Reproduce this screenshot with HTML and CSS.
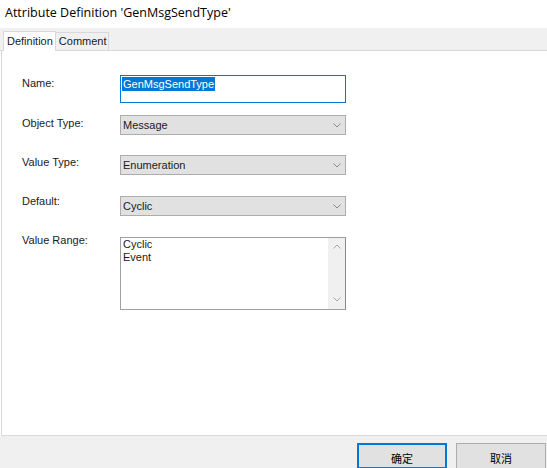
FILE: index.html
```html
<!DOCTYPE html>
<html>
<head>
<meta charset="utf-8">
<link rel="stylesheet" href="styles.css">
</head>
<body>
<div class="window">
  <div class="titlebar">Attribute Definition 'GenMsgSendType'</div>
  <div class="tabstrip">
    <div class="tab active">Definition</div>
    <div class="tab">Comment</div>
  </div>
  <div class="panel">
    <div class="form">
      <div class="labels">
        <div class="lbl l1">Name:</div>
        <div class="lbl l2">Object Type:</div>
        <div class="lbl l3">Value Type:</div>
        <div class="lbl l4">Default:</div>
        <div class="lbl l5">Value Range:</div>
      </div>
      <div class="fields">
        <div class="input"><span class="sel">GenMsgSendType</span></div>
        <div class="combo c1"><span>Message</span><svg class="chev" width="8" height="5" viewBox="0 0 8 5"><polyline points="0.5,0.5 4,4 7.5,0.5" fill="none" stroke="#8a8a8a" stroke-width="1"/></svg></div>
        <div class="combo c2"><span>Enumeration</span><svg class="chev" width="8" height="5" viewBox="0 0 8 5"><polyline points="0.5,0.5 4,4 7.5,0.5" fill="none" stroke="#8a8a8a" stroke-width="1"/></svg></div>
        <div class="combo c3"><span>Cyclic</span><svg class="chev" width="8" height="5" viewBox="0 0 8 5"><polyline points="0.5,0.5 4,4 7.5,0.5" fill="none" stroke="#8a8a8a" stroke-width="1"/></svg></div>
        <div class="listbox">
          <div class="items">
            <div class="item">Cyclic</div>
            <div class="item">Event</div>
          </div>
          <div class="scrollbar">
            <svg width="8" height="5" viewBox="0 0 8 5"><polyline points="0.5,4.5 4,1 7.5,4.5" fill="none" stroke="#a6a6a6" stroke-width="1"/></svg>
            <svg width="8" height="5" viewBox="0 0 8 5"><polyline points="0.5,0.5 4,4 7.5,0.5" fill="none" stroke="#a6a6a6" stroke-width="1"/></svg>
          </div>
        </div>
      </div>
    </div>
  </div>
  <div class="footer">
    <div class="btn default">确定</div>
    <div class="btn">取消</div>
  </div>
</div>
</body>
</html>
```
FILE: styles.css
```css
html, body {
  margin: 0;
  padding: 0;
  background: #ffffff;
}
.window {
  width: 547px;
  height: 468px;
  overflow: hidden;
  display: flex;
  flex-direction: column;
  font-family: "Liberation Sans", Arial, sans-serif;
  font-size: 11px;
  color: #1a1a1a;
}
.titlebar {
  height: 28px;
  flex: none;
  box-sizing: border-box;
  padding: 4px 0 0 5px;
  font-family: "Open Sans", "Noto Sans", sans-serif;
  font-size: 12.5px;
  line-height: 18px;
  color: #000;
  background: #fff;
}
.tabstrip {
  height: 23px;
  flex: none;
  box-sizing: border-box;
  background: #f0f0f0;
  border-bottom: 1px solid #d9d9d9;
  display: flex;
  align-items: flex-end;
  padding-left: 3px;
}
.tab {
  box-sizing: border-box;
  height: 18px;
  padding: 2px 1px 0 3px;
  line-height: 13px;
  border: 1px solid #d9d9d9;
  border-bottom: none;
  border-left: none;
  background: #f0f0f0;
}
.tab.active {
  height: 20px;
  margin-bottom: -1px;
  padding: 3px 2px 0 3px;
  background: #fff;
  border-left: 1px solid #d9d9d9;
  border-right: 1px solid #d9d9d9;
}
.panel {
  flex: 1;
  margin-left: 1px;
  background: #fff;
  border-left: 1px solid #d9d9d9;
  border-bottom: 1px solid #dadada;
}
.form {
  display: grid;
  grid-template-columns: 98px 226px;
  padding: 24px 0 0 20px;
}
.labels {
  display: flex;
  flex-direction: column;
}
.lbl {
  line-height: 13px;
  height: 13px;
}
.l1 { margin-top: 2px; }
.l2 { margin-top: 27px; }
.l3 { margin-top: 26px; }
.l4 { margin-top: 26px; }
.l5 { margin-top: 26px; }
.fields {
  display: flex;
  flex-direction: column;
}
.input {
  box-sizing: border-box;
  height: 28px;
  border: 1px solid #0078d7;
  padding: 1px 0 0 1px;
  line-height: 14px;
}
.sel {
  background: #0078d7;
  color: #fff;
  padding: 0 1px;
  display: inline-block;
  height: 14px;
}
.combo {
  box-sizing: border-box;
  height: 20px;
  border: 1px solid #adadad;
  background: #e1e1e1;
  display: flex;
  align-items: center;
  justify-content: space-between;
  padding: 0 4px 0 2px;
  line-height: 18px;
}
.chev { margin-top: 1px; }
.c1 { margin-top: 12px; }
.c2 { margin-top: 20px; }
.c3 { margin-top: 21px; }
.listbox {
  margin-top: 21px;
  box-sizing: border-box;
  height: 73px;
  border: 1px solid #a0a0a0;
  border-right-color: #888;
  display: flex;
}
.items {
  flex: 1;
  padding-left: 2px;
}
.item {
  line-height: 13px;
}
.scrollbar {
  width: 17px;
  background: #f0f0f0;
  display: flex;
  flex-direction: column;
  justify-content: space-between;
  align-items: center;
  padding: 6px 0 7px;
  box-sizing: border-box;
}
.footer {
  height: 32px;
  flex: none;
  background: #f0f0f0;
  display: flex;
  padding: 7px 0 0 357px;
  box-sizing: border-box;
  gap: 9px;
}
.btn {
  box-sizing: border-box;
  width: 90px;
  height: 26px;
  flex: none;
  border: 1px solid #adadad;
  background: #e1e1e1;
  text-align: center;
  font-family: "Noto Sans CJK SC", sans-serif;
  font-size: 11px;
  line-height: 24px;
  padding-top: 2px;
  color: #000;
}
.btn.default {
  border: 1px solid #0078d7;
  box-shadow: inset 0 0 0 1px #0078d7;
}
```
